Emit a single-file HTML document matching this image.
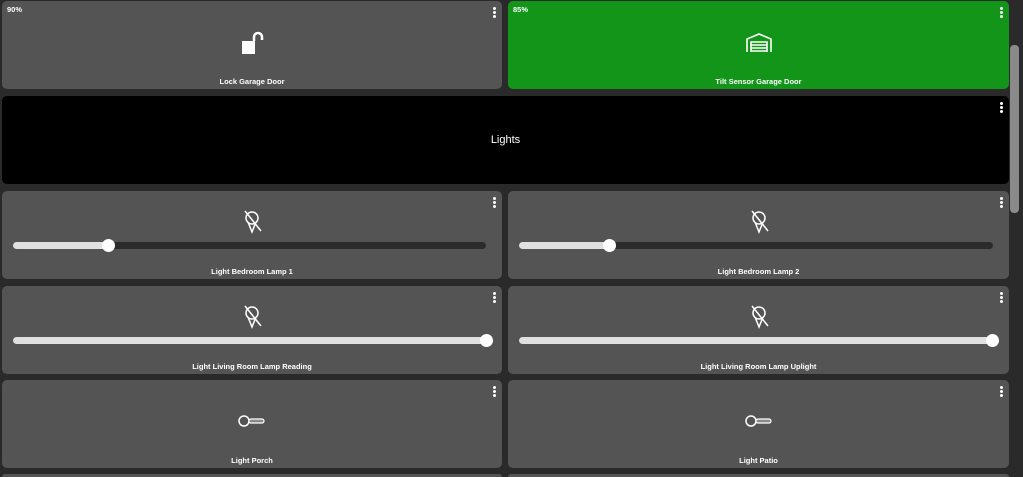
<!DOCTYPE html><html style="overflow:hidden;height:477px"><head><style>
body{margin:0;width:1023px;height:477px;background:#2a2a2a;font-family:"Liberation Sans",sans-serif;overflow:hidden;position:relative;color:#fff}
.c{position:absolute;background:#545454;border-radius:5px;width:500px;height:88px}
.l{left:2px}.r{left:508px;width:501px}
.n{position:absolute;bottom:3px;left:0;right:0;text-align:center;font-size:7.5px;font-weight:bold}
.p{position:absolute;top:4px;left:5px;font-size:7.5px;font-weight:bold}
.d{position:absolute;top:6px;right:6px;width:3px}
.d i{display:block;width:3px;height:3px;border-radius:50%;background:#fff;margin-bottom:1px}
.ic{position:absolute;left:50%;transform:translateX(-50%)}
.tr{position:absolute;left:11px;right:16px;top:51px;height:7px;border-radius:4px;background:#2b2b2b}
.f{position:absolute;left:0;top:0;height:7px;border-radius:4px;background:#e0e0e0}
.k{position:absolute;top:-3px;width:13px;height:13px;border-radius:50%;background:#fff;margin-left:-6px}
</style></head><body>
<div class="c l" style="top:1px"><div class="p">90%</div><div class="d"><i></i><i></i><i></i></div>
<svg class="ic" style="top:30px" width="30" height="26" viewBox="0 0 30 26"><rect x="5" y="10" width="13" height="13" fill="#fff"/><path d="M17 10V6a4 4 0 0 1 8 0v3" stroke="#fff" stroke-width="2.5" fill="none"/></svg>
<div class="n">Lock Garage Door</div></div>
<div class="c r" style="top:1px;background:#13951a"><div class="p">85%</div><div class="d"><i></i><i></i><i></i></div>
<svg class="ic" style="top:31px" width="28" height="22" viewBox="0 0 28 22"><path d="M2 20V7L14 2l12 5v13M6 20V10h16v10M6 13h16M6 16h16M6 19h16" stroke="#fff" stroke-width="1.6" fill="none"/></svg>
<div class="n">Tilt Sensor Garage Door</div></div>
<div class="c" style="top:96px;left:2px;width:1007px;background:#000"><div class="d"><i></i><i></i><i></i></div><div style="position:absolute;top:38px;width:100%;text-align:center;font-size:11px">Lights</div></div>
<div class="c l" style="top:191px"><div class="d"><i></i><i></i><i></i></div>
<svg class="ic" style="top:17px" width="26" height="28" viewBox="0 0 26 28"><circle cx="13" cy="10" r="6" stroke="#fff" stroke-width="1.5" fill="none"/><path d="M9 14l4 10 4-10M6 3l16 20" stroke="#fff" stroke-width="1.5" fill="none"/></svg>
<div class="tr"><div class="f" style="width:95px"></div><div class="k" style="left:95px"></div></div><div class="n">Light Bedroom Lamp 1</div></div>
<div class="c r" style="top:191px"><div class="d"><i></i><i></i><i></i></div>
<svg class="ic" style="top:17px" width="26" height="28" viewBox="0 0 26 28"><circle cx="13" cy="10" r="6" stroke="#fff" stroke-width="1.5" fill="none"/><path d="M9 14l4 10 4-10M6 3l16 20" stroke="#fff" stroke-width="1.5" fill="none"/></svg>
<div class="tr"><div class="f" style="width:90px"></div><div class="k" style="left:90px"></div></div><div class="n">Light Bedroom Lamp 2</div></div>
<div class="c l" style="top:286px"><div class="d"><i></i><i></i><i></i></div>
<svg class="ic" style="top:17px" width="26" height="28" viewBox="0 0 26 28"><circle cx="13" cy="10" r="6" stroke="#fff" stroke-width="1.5" fill="none"/><path d="M9 14l4 10 4-10M6 3l16 20" stroke="#fff" stroke-width="1.5" fill="none"/></svg>
<div class="tr"><div class="f" style="width:473px"></div><div class="k" style="left:473px"></div></div><div class="n">Light Living Room Lamp Reading</div></div>
<div class="c r" style="top:286px"><div class="d"><i></i><i></i><i></i></div>
<svg class="ic" style="top:17px" width="26" height="28" viewBox="0 0 26 28"><circle cx="13" cy="10" r="6" stroke="#fff" stroke-width="1.5" fill="none"/><path d="M9 14l4 10 4-10M6 3l16 20" stroke="#fff" stroke-width="1.5" fill="none"/></svg>
<div class="tr"><div class="f" style="width:473px"></div><div class="k" style="left:473px"></div></div><div class="n">Light Living Room Lamp Uplight</div></div>
<div class="c l" style="top:380px"><div class="d"><i></i><i></i><i></i></div>
<svg class="ic" style="top:34px" width="28" height="14" viewBox="0 0 28 14"><circle cx="6" cy="7" r="5" stroke="#fff" stroke-width="1.5" fill="none"/><rect x="11" y="5" width="15" height="4" rx="2" stroke="#fff" stroke-width="1.2" fill="#888"/></svg>
<div class="n">Light Porch</div></div>
<div class="c r" style="top:380px"><div class="d"><i></i><i></i><i></i></div>
<svg class="ic" style="top:34px" width="28" height="14" viewBox="0 0 28 14"><circle cx="6" cy="7" r="5" stroke="#fff" stroke-width="1.5" fill="none"/><rect x="11" y="5" width="15" height="4" rx="2" stroke="#fff" stroke-width="1.2" fill="#888"/></svg>
<div class="n">Light Patio</div></div>
<div class="c l" style="top:474px;height:3px;border-radius:5px 5px 0 0"></div><div class="c r" style="top:474px;height:3px;border-radius:5px 5px 0 0"></div>
<div style="position:absolute;left:1010px;top:45px;width:9px;height:168px;border-radius:4px;background:#8a8a8a"></div>
</body></html>
